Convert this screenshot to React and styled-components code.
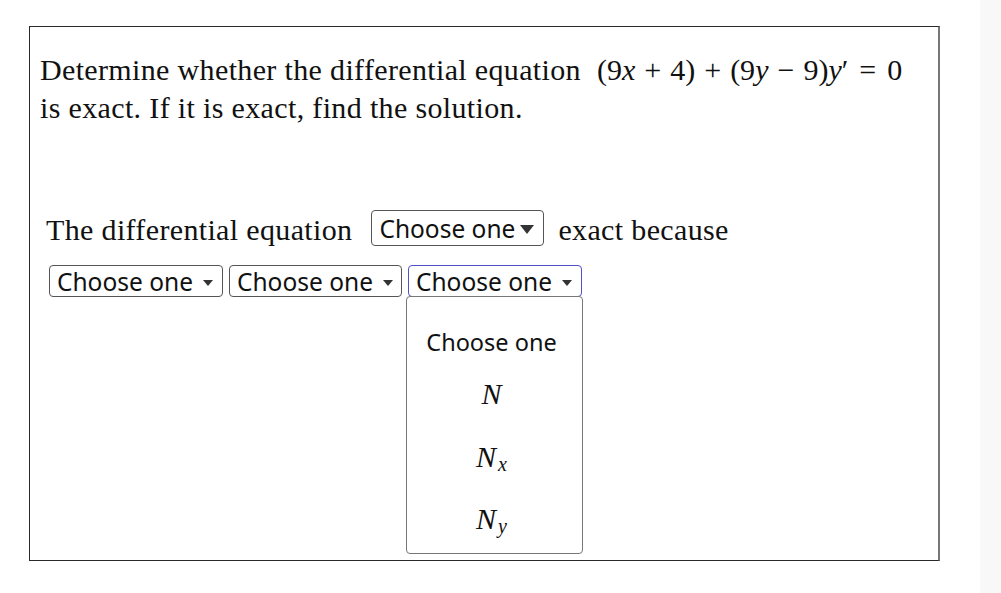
import React from 'react';
import styled, { createGlobalStyle } from 'styled-components';

const Global = createGlobalStyle`
  html, body { margin: 0; padding: 0; background: #fff; }
  body { font-family: "Liberation Serif", serif; color: #111; }
`;

const Page = styled.div`
  display: flex;
  width: 1001px;
  height: 593px;
  overflow: hidden;
`;

const Main = styled.div`
  flex: 1;
  padding: 26px 0 0 29px;
`;

const Strip = styled.div`
  width: 21px;
  background: #f8f8f8;
`;

const Card = styled.div`
  box-sizing: border-box;
  width: 911px;
  height: 535px;
  border: 1px solid #2a2a2a;
  border-right: 2px solid #777;
  padding: 24px 0 0 10px;
`;

const Question = styled.p`
  margin: 0;
  font-size: 30px;
  line-height: 38px;
  letter-spacing: 0.35px;
`;

const MathSpan = styled.span`
  margin-left: 16px;
  letter-spacing: 0;
`;

const Var = styled.i`
  font-style: italic;
`;

const Op = styled.span`
  margin: 0 ${p => p.m || 9}px;
`;

const Answer = styled.div`
  margin-top: 83px;
  display: flex;
  flex-direction: column;
  gap: 19px;
`;

const Line = styled.div`
  display: flex;
  align-items: center;
  padding-left: ${p => p.pl}px;
  gap: ${p => p.gap || 0}px;
  font-size: 30px;
  letter-spacing: 0.35px;
`;

const Words = styled.span`
  margin: 0 ${p => p.mr || 0}px 0 ${p => p.ml || 0}px;
  position: relative;
  top: 2px;
`;

const Select = styled.div`
  position: relative;
  display: inline-flex;
  align-items: center;
  box-sizing: border-box;
  width: ${p => p.w}px;
  height: ${p => p.h}px;
  padding-left: 7px;
  border: 1px solid ${p => (p.focused ? '#5050c8' : '#555')};
  border-radius: 4px;
  font-family: "Noto Sans", sans-serif;
  font-size: 24.5px;
  letter-spacing: 0;
  color: #111;
  background: #fff;
`;

const Caret = styled.span`
  display: inline-block;
  margin-left: ${p => p.ml}px;
  width: 0;
  height: 0;
  border-left: ${p => p.s}px solid transparent;
  border-right: ${p => p.s}px solid transparent;
  border-top: ${p => p.s * 1.25}px solid #333;
  margin-top: 3px;
`;

const Menu = styled.div`
  position: absolute;
  top: 100%;
  left: -3px;
  width: 177px;
  height: 258px;
  box-sizing: border-box;
  border: 1px solid #777;
  border-radius: 4px;
  background: #fff;
  display: flex;
  flex-direction: column;
  align-items: center;
  padding: 25px 6px 0 0;
  z-index: 2;
`;

const Option = styled.div`
  height: ${p => p.h}px;
  display: flex;
  align-items: center;
  font-family: ${p => (p.math ? '"Liberation Serif", serif' : '"Noto Sans", sans-serif')};
  font-style: ${p => (p.math ? 'italic' : 'normal')};
  font-size: ${p => (p.math ? 30 : 23.5)}px;
`;

const Sub = styled.span`
  font-size: 20px;
  position: relative;
  top: 7px;
  margin-left: 2px;
`;

export default function App() {
  return (
    <>
      <Global />
      <Page>
        <Main>
          <Card>
            <Question>
              Determine whether the differential equation
              <MathSpan>
                (9<Var>x</Var><Op>+</Op>4)<Op>+</Op>(9<Var>y</Var><Op>−</Op>9)<Var>y</Var>′<Op m={11}>=</Op>0
              </MathSpan>
              <br />
              is exact. If it is exact, find the solution.
            </Question>
            <Answer>
              <Line pl={6}>
                <Words mr={19}>The differential equation</Words>
                <Select w={173} h={36}>
                  Choose one<Caret s={7.5} ml={5} />
                </Select>
                <Words ml={14}>exact because</Words>
              </Line>
              <Line pl={9} gap={6}>
                <Select w={174} h={32}>
                  Choose one<Caret s={5} ml={10} />
                </Select>
                <Select w={173} h={32}>
                  Choose one<Caret s={5} ml={10} />
                </Select>
                <Select w={174} h={32} focused>
                  Choose one<Caret s={5} ml={10} />
                  <Menu>
                    <Option h={40}>Choose one</Option>
                    <Option h={64} math>N</Option>
                    <Option h={62} math>
                      N<Sub>x</Sub>
                    </Option>
                    <Option h={62} math>
                      N<Sub>y</Sub>
                    </Option>
                  </Menu>
                </Select>
              </Line>
            </Answer>
          </Card>
        </Main>
        <Strip />
      </Page>
    </>
  );
}
